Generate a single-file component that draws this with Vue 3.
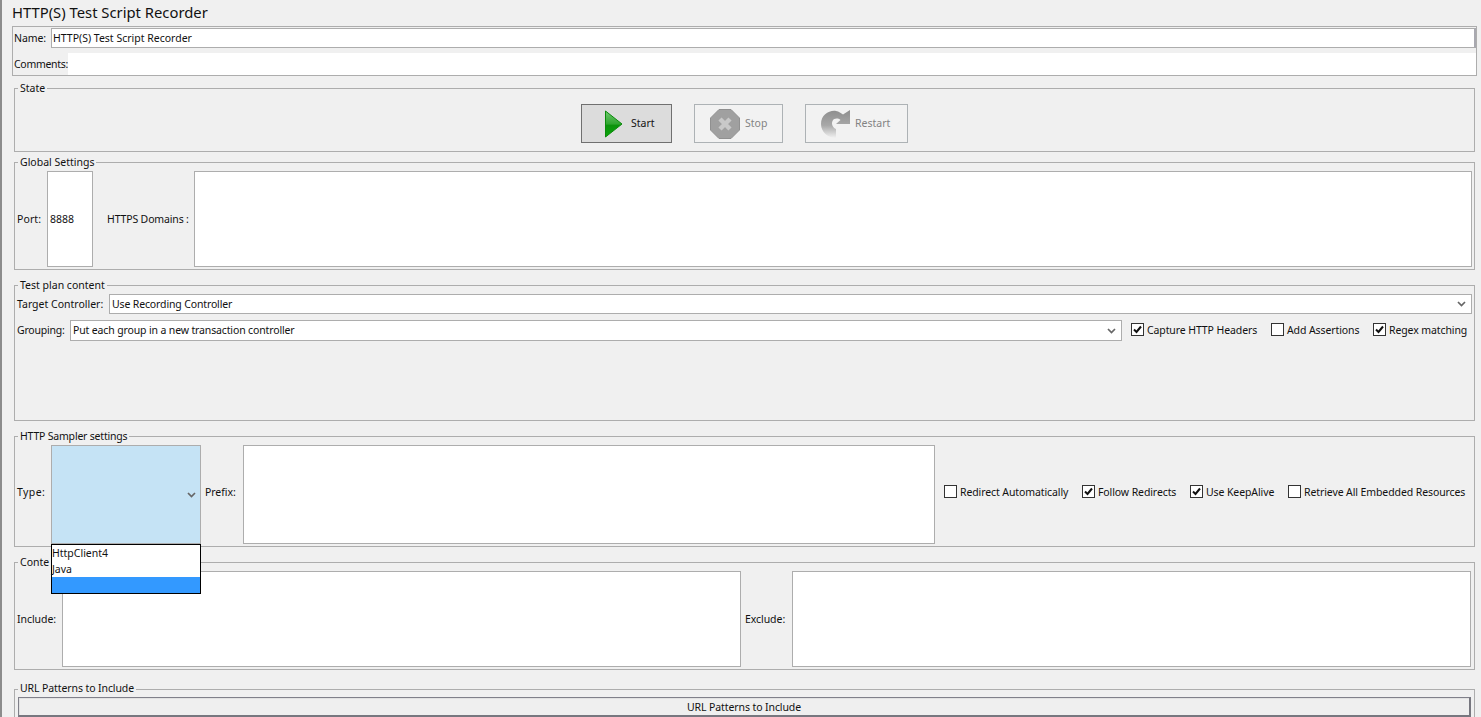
<template>
  <div class="page">
    <h1 class="title">HTTP(S) Test Script Recorder</h1>

    <div class="name-box">
      <div class="name-row">
        <label class="name-label">Name:</label>
        <div class="name-input">HTTP(S) Test Script Recorder</div>
      </div>
      <div class="comments-row">
        <label class="comments-label">Comments:</label>
        <div class="comments-input"></div>
      </div>
    </div>

    <section class="group state">
      <span class="legend">State</span>
      <div class="state-buttons">
        <button class="btn btn-start">
          <svg width="20" height="28" viewBox="0 0 20 28">
            <defs>
              <linearGradient id="playGrad" x1="0" y1="0" x2="0" y2="1">
                <stop offset="0" stop-color="#6fc96f" />
                <stop offset="0.5" stop-color="#2ea52e" />
                <stop offset="0.55" stop-color="#0c930c" />
                <stop offset="1" stop-color="#0aa50a" />
              </linearGradient>
            </defs>
            <path d="M1.5 1 L18 14 L1.5 27 Z" fill="url(#playGrad)" stroke="#0b8a0b" stroke-width="1" />
          </svg>
          <span>Start</span>
        </button>
        <button class="btn btn-stop" disabled>
          <svg width="30" height="30" viewBox="0 0 30 30">
            <path d="M9 0.5 H21 L29.5 9 V21 L21 29.5 H9 L0.5 21 V9 Z" fill="#a0a0a0" stroke="#909090" />
            <path d="M10 10 L20 20 M20 10 L10 20" stroke="#c9c9c9" stroke-width="4.5" />
          </svg>
          <span>Stop</span>
        </button>
        <button class="btn btn-restart" disabled>
          <svg width="30" height="28" viewBox="0 0 30 28">
            <defs>
              <linearGradient id="restartGrad" x1="0" y1="0" x2="0" y2="1">
                <stop offset="0" stop-color="#8e8e8e" />
                <stop offset="0.55" stop-color="#a8a8a8" />
                <stop offset="1" stop-color="#f2f2f2" />
              </linearGradient>
            </defs>
            <path d="M0 14 C0 5 8 0 15 1 C18 1.5 20 3 22 4.5 L29 0 V14 H15 L19.5 10 C17 8 13 8 11.5 11 C10 14 12 18 15 19 L15 28 C7 28 0 22 0 14 Z" fill="url(#restartGrad)" />
          </svg>
          <span>Restart</span>
        </button>
      </div>
    </section>

    <section class="group global">
      <span class="legend">Global Settings</span>
      <div class="row fill">
        <label class="port-label">Port:</label>
        <div class="field port-input"><span>8888</span></div>
        <label class="domains-label">HTTPS Domains :</label>
        <div class="field grow"></div>
      </div>
    </section>

    <section class="group plan">
      <span class="legend">Test plan content</span>
      <div class="row target-row">
        <label class="target-label">Target Controller:</label>
        <div class="field select grow">
          <span>Use Recording Controller</span>
          <svg class="chev" width="9" height="6" viewBox="0 0 9 6"><path d="M1 1 L4.5 4.5 L8 1" /></svg>
        </div>
      </div>
      <div class="row grouping-row">
        <label class="grouping-label">Grouping:</label>
        <div class="field select grow">
          <span>Put each group in a new transaction controller</span>
          <svg class="chev" width="9" height="6" viewBox="0 0 9 6"><path d="M1 1 L4.5 4.5 L8 1" /></svg>
        </div>
        <div class="checks plan-checks">
          <label v-for="c in planChecks" :key="c.text" class="check" :style="{ width: c.width + 'px' }">
            <span class="box">
              <svg v-if="c.on" width="11" height="11" viewBox="0 0 11 11"><path d="M2 5.5 L4.5 8 L9 2.5" /></svg>
            </span>
            {{ c.text }}
          </label>
        </div>
      </div>
    </section>

    <section class="group sampler">
      <span class="legend">HTTP Sampler settings</span>
      <div class="row fill">
        <label class="type-label">Type:</label>
        <div class="type-wrap">
          <div class="type-select">
            <svg class="chev" width="9" height="6" viewBox="0 0 9 6"><path d="M1 1 L4.5 4.5 L8 1" /></svg>
          </div>
          <ul class="popup">
            <li>HttpClient4</li>
            <li>Java</li>
            <li class="selected"></li>
          </ul>
        </div>
        <label class="prefix-label">Prefix:</label>
        <div class="field prefix-input"></div>
        <div class="checks sampler-checks">
          <label v-for="c in samplerChecks" :key="c.text" class="check" :style="{ width: c.width + 'px' }">
            <span class="box">
              <svg v-if="c.on" width="11" height="11" viewBox="0 0 11 11"><path d="M2 5.5 L4.5 8 L9 2.5" /></svg>
            </span>
            {{ c.text }}
          </label>
        </div>
      </div>
    </section>

    <section class="group content">
      <span class="legend">Conte</span>
      <div class="row fill">
        <label class="include-label">Include:</label>
        <div class="field include-input"></div>
        <label class="exclude-label">Exclude:</label>
        <div class="field grow"></div>
      </div>
    </section>

    <section class="group patterns">
      <span class="legend patterns-legend">URL Patterns to Include</span>
      <div class="header-btn">URL Patterns to Include</div>
    </section>
  </div>
</template>

<script setup>
const planChecks = [
  { text: 'Capture HTTP Headers', on: true, width: 140 },
  { text: 'Add Assertions', on: false, width: 102 },
  { text: 'Regex matching', on: true, width: 96 },
];

const samplerChecks = [
  { text: 'Redirect Automatically', on: false, width: 138 },
  { text: 'Follow Redirects', on: true, width: 108 },
  { text: 'Use KeepAlive', on: true, width: 98 },
  { text: 'Retrieve All Embedded Resources', on: false, width: 180 },
];
</script>

<style>
html,
body {
  margin: 0;
  background: #f0f0f0;
}
</style>

<style scoped>
.page {
  box-sizing: border-box;
  width: 1481px;
  height: 717px;
  overflow: hidden;
  background: #f0f0f0;
  border-left: 2px solid #8c8c8c;
  font-family: "Noto Sans", "Liberation Sans", sans-serif;
  font-size: 10.5px;
  color: #111;
  display: flex;
  flex-direction: column;
}

.page > * {
  flex: none;
}

.title {
  margin: 0 0 0 10px;
  height: 26px;
  line-height: 24px;
  font-size: 14.8px;
  font-weight: 400;
  white-space: nowrap;
}

label {
  white-space: nowrap;
  letter-spacing: -0.06px;
}

.btn span,
.grouping-row label,
.grouping-row .select span,
.sampler label {
  padding-bottom: 2px;
}

.name-box {
  box-sizing: border-box;
  width: 1465px;
  height: 50px;
  margin-left: 10px;
  border: 1px solid #adadad;
  padding-top: 1px;
}

.name-row {
  display: flex;
  align-items: center;
  height: 20px;
  margin-bottom: 5px;
}

.name-label {
  width: 38px;
  padding-left: 1px;
  box-sizing: border-box;
}

.name-input {
  flex: 1;
  height: 20px;
  line-height: 18px;
  box-sizing: border-box;
  background: #fff;
  border: 1px solid #adadad;
  border-right: 2px solid #a9a9b0;
  padding-left: 1px;
}

.comments-row {
  display: flex;
  align-items: center;
  height: 22px;
}

.comments-label {
  width: 55px;
  padding-left: 1px;
  box-sizing: border-box;
  letter-spacing: -0.3px;
}

.comments-input {
  flex: 1;
  height: 22px;
  background: #fff;
}

.group {
  position: relative;
  box-sizing: border-box;
  width: 1461px;
  margin-left: 12px;
  border: 1px solid #adadad;
}

.legend {
  position: absolute;
  top: -7px;
  left: 3px;
  padding: 0 2px;
  background: #f0f0f0;
  line-height: 13px;
  white-space: nowrap;
}

.sampler .legend {
  letter-spacing: -0.2px;
}

.patterns-legend {
  top: -8px;
  letter-spacing: -0.1px;
}

.state {
  margin-top: 12px;
  height: 64px;
}

.state-buttons {
  display: flex;
  padding: 15px 0 0 566px;
  gap: 22px;
}

.btn {
  box-sizing: border-box;
  height: 39px;
  display: flex;
  align-items: center;
  padding: 0;
  font: inherit;
  background: #f2f2f2;
  border: 1px solid #adb2b5;
  color: #838383;
}

.btn-start {
  width: 91px;
  background: #dcdcdc;
  border-color: #707070;
  color: #111;
  padding-left: 22px;
  gap: 7px;
}

.btn-stop {
  width: 89px;
  padding-left: 15px;
  gap: 5px;
}

.btn-restart {
  width: 103px;
  padding-left: 15px;
  gap: 4px;
}

.global {
  margin-top: 10px;
  height: 108px;
}

.row {
  display: flex;
  align-items: center;
}

.fill {
  height: 100%;
  padding-top: 8px;
  padding-bottom: 2px;
  box-sizing: border-box;
  align-items: stretch;
}

.fill > label {
  align-self: center;
}

.field {
  box-sizing: border-box;
  background: #fff;
  border: 1px solid #adadad;
}

.grow {
  flex: 1;
}

.port-label {
  width: 32px;
  padding-left: 2px;
  box-sizing: border-box;
  letter-spacing: 0.1px;
}

.port-input {
  width: 46px;
  display: flex;
  align-items: center;
  padding-left: 2px;
}

.domains-label {
  width: 101px;
  padding-left: 14px;
  box-sizing: border-box;
  letter-spacing: -0.15px;
}

.global .fill .grow {
  margin-right: 2px;
}

.plan {
  margin-top: 15px;
  height: 136px;
}

.target-row {
  height: 20px;
  margin-top: 8px;
  padding-right: 2px;
}

.target-label {
  width: 94px;
  padding-left: 2px;
  box-sizing: border-box;
  flex: none;
  letter-spacing: 0;
}

.grouping-row {
  height: 21px;
  margin-top: 6px;
  padding-right: 2px;
}

.grouping-label {
  width: 55px;
  padding-left: 2px;
  box-sizing: border-box;
  flex: none;
  letter-spacing: -0.2px;
}

.select {
  height: 100%;
  display: flex;
  align-items: center;
  justify-content: space-between;
  padding: 0 5px 0 2px;
  letter-spacing: -0.14px;
}

.chev {
  fill: none;
  stroke: #666;
  stroke-width: 1.7;
}

.checks {
  display: flex;
  flex: none;
}

.plan-checks {
  width: 341px;
  padding-left: 9px;
  box-sizing: content-box;
}

.check {
  display: flex;
  align-items: center;
  gap: 3px;
  white-space: nowrap;
  flex: none;
  letter-spacing: -0.1px;
}

.box {
  box-sizing: border-box;
  width: 13px;
  height: 13px;
  flex: none;
  background: #fff;
  border: 1px solid #333;
  display: flex;
  align-items: center;
  justify-content: center;
}

.box svg {
  fill: none;
  stroke: #111;
  stroke-width: 2;
}

.sampler {
  margin-top: 15px;
  height: 111px;
}

.sampler .fill > label {
  margin-bottom: 3px;
}

.type-label {
  width: 36px;
  padding-left: 2px;
  box-sizing: border-box;
  letter-spacing: 0.4px;
}

.type-wrap {
  position: relative;
  width: 150px;
}

.type-select {
  box-sizing: border-box;
  height: 99px;
  background: #c5e3f5;
  border: 1px solid #adadad;
  position: relative;
}

.type-select .chev {
  position: absolute;
  right: 4px;
  top: 46px;
}

.popup {
  position: absolute;
  z-index: 2;
  top: 99px;
  left: 0;
  box-sizing: border-box;
  width: 150px;
  height: 50px;
  margin: 0;
  padding: 0;
  list-style: none;
  background: #fff;
  border: 1px solid #000;
}

.popup li {
  height: 16px;
  line-height: 16px;
}

.popup .selected {
  background: #3399ff;
}

.prefix-label {
  width: 42px;
  padding-left: 4px;
  box-sizing: border-box;
}

.prefix-input {
  width: 692px;
}

.sampler-checks {
  padding-left: 9px;
  align-self: center;
  margin-bottom: 4px;
}

.content {
  margin-top: 15px;
  height: 108px;
}

.include-label {
  width: 47px;
  padding-left: 2px;
  box-sizing: border-box;
}

.include-input {
  width: 679px;
}

.exclude-label {
  width: 51px;
  padding-left: 4px;
  box-sizing: border-box;
}

.content .fill .grow {
  margin-right: 3px;
}

.patterns {
  margin-top: 19px;
  height: 40px;
  padding: 7px 3px 0 3px;
}

.header-btn {
  box-sizing: border-box;
  height: 20px;
  line-height: 18px;
  text-align: center;
  letter-spacing: -0.1px;
  background: #efefef;
  border: 1px solid #80808a;
  border-right: 2px solid #77777f;
  border-bottom: 2px solid #77777f;
  box-shadow: inset 0 1px 0 #e2e2e2, inset 1px 0 0 #e2e2e2;
}
</style>
